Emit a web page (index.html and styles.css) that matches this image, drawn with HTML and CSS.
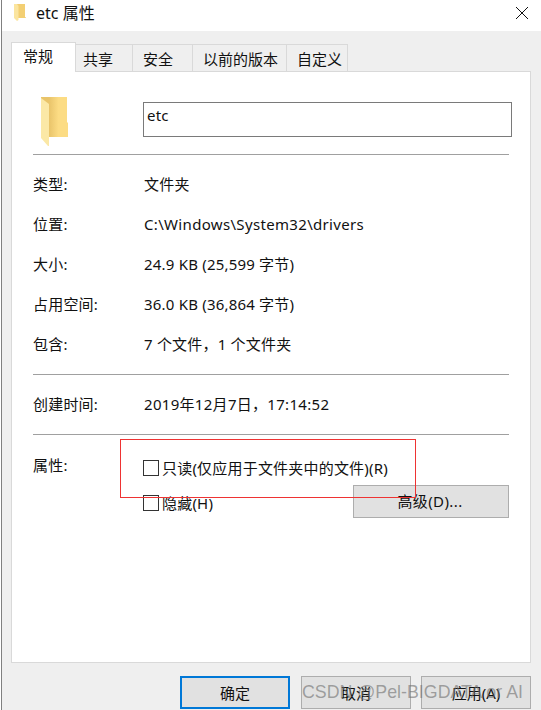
FILE: index.html
```html
<!DOCTYPE html>
<html lang="zh-CN">
<head>
<meta charset="utf-8">
<title>etc 属性</title>
<link rel="stylesheet" href="styles.css">
</head>
<body>
<div class="window">
  <header class="titlebar">
    <svg class="title-icon" width="12" height="17" viewBox="0 0 12 17"><path d="M3 0H11V13L12 13.500V14H3Z" fill="#f3cf73"/><path d="M0 0H3L4.500 2V16L3 17L0 14Z" fill="#fbe59f"/></svg>
    <span class="title-text">etc 属性</span>
    <svg class="close" width="14" height="14" viewBox="0 0 14 14"><path d="M1 1L13 13M13 1L1 13" stroke="#111" stroke-width="1" fill="none"/></svg>
  </header>
  <div class="body">
    <nav class="tabs">
      <div class="tab active">常规</div>
      <div class="tab t2">共享</div>
      <div class="tab t3">安全</div>
      <div class="tab t4">以前的版本</div>
      <div class="tab t5">自定义</div>
    </nav>
    <main class="panel">
      <div class="head-row">
        <svg class="folder" width="28" height="49" viewBox="0 0 28 49">
          <defs><linearGradient id="fg" x1="0" x2="1" y1="0" y2="0"><stop offset="0.300" stop-color="#e9c46a"/><stop offset="0.650" stop-color="#fcdc84"/></linearGradient></defs>
          <path d="M0 0H26V25L27 26V40H8V10L0 4Z" fill="url(#fg)"/>
          <path d="M0 1L8 7V49L7 49L0 41Z" fill="#fbe8a6"/>
        </svg>
        <div class="name-box">etc</div>
      </div>
      <hr class="sep first">
      <dl class="rows">
        <div class="row"><dt>类型:</dt><dd>文件夹</dd></div>
        <div class="row"><dt>位置:</dt><dd class="path">C:\Windows\System32\drivers</dd></div>
        <div class="row"><dt>大小:</dt><dd>24.9 KB (25,599 字节)</dd></div>
        <div class="row"><dt>占用空间:</dt><dd>36.0 KB (36,864 字节)</dd></div>
        <div class="row"><dt>包含:</dt><dd>7 个文件，1 个文件夹</dd></div>
      </dl>
      <hr class="sep second">
      <div class="row single"><dt>创建时间:</dt><dd class="date">2019年12月7日，17:14:52</dd></div>
      <hr class="sep third">
      <div class="attrs">
        <div class="attr-label">属性:</div>
        <div class="attr-controls">
          <label class="check c1"><span class="box"></span>只读(仅应用于文件夹中的文件)(R)</label>
          <div class="attr-line">
            <label class="check"><span class="box"></span>隐藏(H)</label>
            <button class="btn adv">高级(D)...</button>
          </div>
        </div>
      </div>
    </main>
    <footer class="actions">
      <button class="btn primary">确定</button>
      <button class="btn act">取消</button>
      <button class="btn act">应用(A)</button>
    </footer>
  </div>
  <div class="redbox"></div>
  <div class="watermark">CSDN @Pel-BIGDATA or AI</div>
</div>
</body>
</html>
```
FILE: styles.css
```css
* { box-sizing: border-box; }
html, body { margin: 0; padding: 0; }
body {
  width: 541px; height: 710px; overflow: hidden; background: #fff; color: #111;
  font-family: "Noto Sans", "Noto Sans CJK SC", sans-serif; font-size: 15px; line-height: 20px;
}
.window { position: relative; width: 540px; height: 710px; margin-left: 1px; border-left: 1px solid #808080; overflow: hidden; }
.titlebar { height: 31px; display: flex; align-items: center; background: #fff; padding: 0 12px 5px 12px; }
.title-icon { margin-right: 10px; margin-top: -1px; }
.title-text { font-size: 16px; flex: 1; }
.body { height: 679px; background: #efefef; padding-left: 9px; }
.tabs { display: flex; height: 40px; align-items: flex-end; }
.tab { height: 27px; border: 1px solid #d9d9d9; border-width: 1px 1px 0 0; line-height: 28px; background: #efefef; }
.tab.active { height: 30px; width: 65px; padding-left: 11px; background: #fff; border: 1px solid #d9d9d9; border-bottom: 0; line-height: 27px; margin-bottom: -1px; position: relative; z-index: 1; }
.t2 { width: 57px; padding-left: 7px; }
.t3 { width: 60px; padding-left: 10px; }
.t4 { width: 94px; padding-left: 10px; }
.t5 { width: 61px; padding-left: 10px; }
.panel { width: 520px; height: 592px; background: #fff; border: 1px solid #d9d9d9; padding: 0 21px; letter-spacing: .2px; }
.head-row { display: flex; height: 82px; padding-top: 25px; }
.folder { margin: 0 0 0 8px; flex: none; }
.name-box { flex: none; margin-left: 74px; margin-top: 5px; width: 369px; height: 35px; border: 1px solid #7a7a7a; padding: 2px 3px; }
.sep { margin: 0; border: 0; height: 1px; background: #a0a0a0; width: 476px; }
.rows { margin: 0; padding-top: 9px; height: 219px; }
.row { display: flex; height: 40px; align-items: center; margin: 0; }
dt { width: 111px; }
dd { margin: 0; }
.path { letter-spacing: .33px; }
.date { letter-spacing: .3px; }
.row.single { height: 59px; padding-bottom: 2px; }
.attrs { display: flex; padding-top: 20px; }
.attr-label { width: 110px; }
.attr-controls { flex: 1; padding-top: 5px; }
.check { display: flex; align-items: center; gap: 3px; }
.box { width: 16px; height: 16px; border: 1px solid #333; background: #fff; }
.c1 { height: 20px; margin-top: -2px; }
.attr-line { display: flex; justify-content: space-between; width: 366px; height: 33px; margin-top: 7px; }
.attr-line .check { margin-top: 8px; align-self: flex-start; height: 20px; }
.btn { font: inherit; color: #111; background: #e1e1e1; border: 1px solid #adadad; padding: 0; }
.adv { width: 156px; height: 33px; padding: 0 2px 2px 0; letter-spacing: .4px; }
.actions { display: flex; padding: 13px 0 0 169px; }
.primary { width: 111px; height: 33px; border: 2px solid #0078d7; margin-right: 11px; }
.act { width: 111px; height: 33px; margin-right: 10px; }
.redbox { position: absolute; left: 118px; top: 439px; width: 296px; height: 59px; border: 1px solid #e33; }
.watermark { position: absolute; left: 300px; top: 680px; font-family: "Liberation Sans", sans-serif; font-size: 17.8px; line-height: 24px; color: rgba(110,110,110,.6); white-space: nowrap; }
```
